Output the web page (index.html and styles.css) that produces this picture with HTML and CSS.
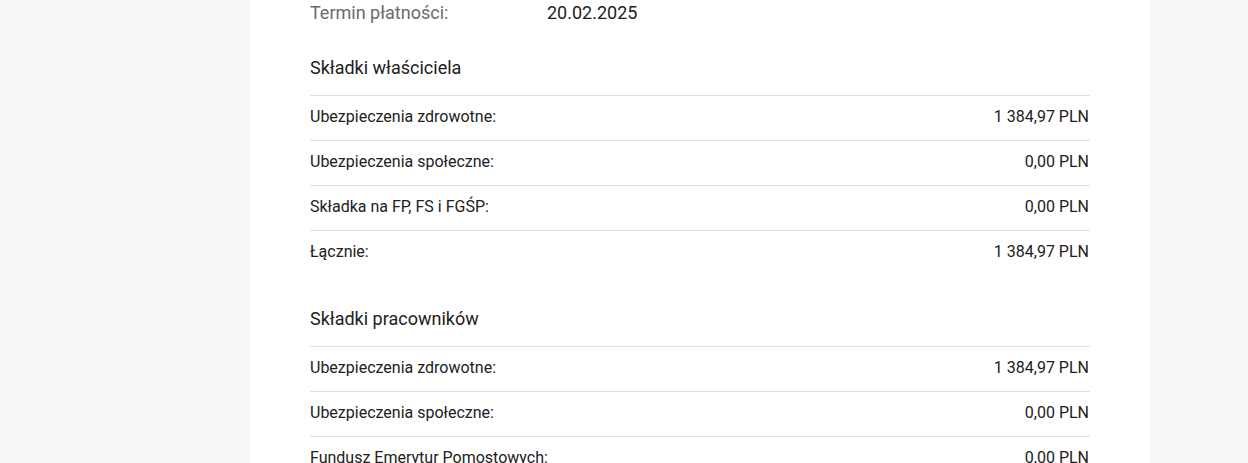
FILE: index.html
```html
<!DOCTYPE html>
<html lang="pl">
<head>
    <meta charset="UTF-8">
    <title>Składki ZUS</title>
    <link rel="stylesheet" href="styles.css">
</head>
<body>

<div class="layout">
    <div class="sidebar"></div>
    <main class="main">
        <div class="panel">
            <div class="term">
                <span class="term-label">Termin płatności:</span>
                <span class="term-value">20.02.2025</span>
            </div>

            <div class="section section-first">
                <h3 class="section-title">Składki właściciela</h3>
                <div class="row"><span>Ubezpieczenia zdrowotne:</span><span>1 384,97 PLN</span></div>
                <div class="row"><span>Ubezpieczenia społeczne:</span><span>0,00 PLN</span></div>
                <div class="row"><span>Składka na FP, FS i FGŚP:</span><span>0,00 PLN</span></div>
                <div class="row"><span>Łącznie:</span><span>1 384,97 PLN</span></div>
            </div>

            <div class="section">
                <h3 class="section-title">Składki pracowników</h3>
                <div class="row"><span>Ubezpieczenia zdrowotne:</span><span>1 384,97 PLN</span></div>
                <div class="row"><span>Ubezpieczenia społeczne:</span><span>0,00 PLN</span></div>
                <div class="row"><span>Fundusz Emerytur Pomostowych:</span><span>0,00 PLN</span></div>
                <div class="row"><span>Łącznie:</span><span>1 384,97 PLN</span></div>
            </div>
        </div>
    </main>
</div>

</body>
</html>
```

FILE: styles.css
```css
body { margin: 0; background-color: #f5f6f8; font-family: Roboto, "Noto Sans", sans-serif; color: #212121; }
.layout { display: flex; }
.sidebar { width: 152px; flex-shrink: 0; }
.main { flex: 1; display: flex; justify-content: center; }
.panel { width: 780px; padding: 0 60px 40px; background-color: #fff; min-height: 600px; }
.term { display: flex; font-size: 18px; line-height: 26px; }
.term-label { width: 237px; color: #6b6b6b; }
.term-value { color: #212121; }
.section { margin-top: 32px; }
.section-first { margin-top: 30px; }
.section-title { margin: 0; padding-bottom: 15px; font-size: 18px; font-weight: 400; line-height: 24px; }
.row {
    display: flex;
    justify-content: space-between;
    border-top: 1px solid #e0e0e0;
    font-size: 16px;
    line-height: 42px;
    padding-bottom: 2px;
}
.row span:last-child { padding-right: 1px; }
```
